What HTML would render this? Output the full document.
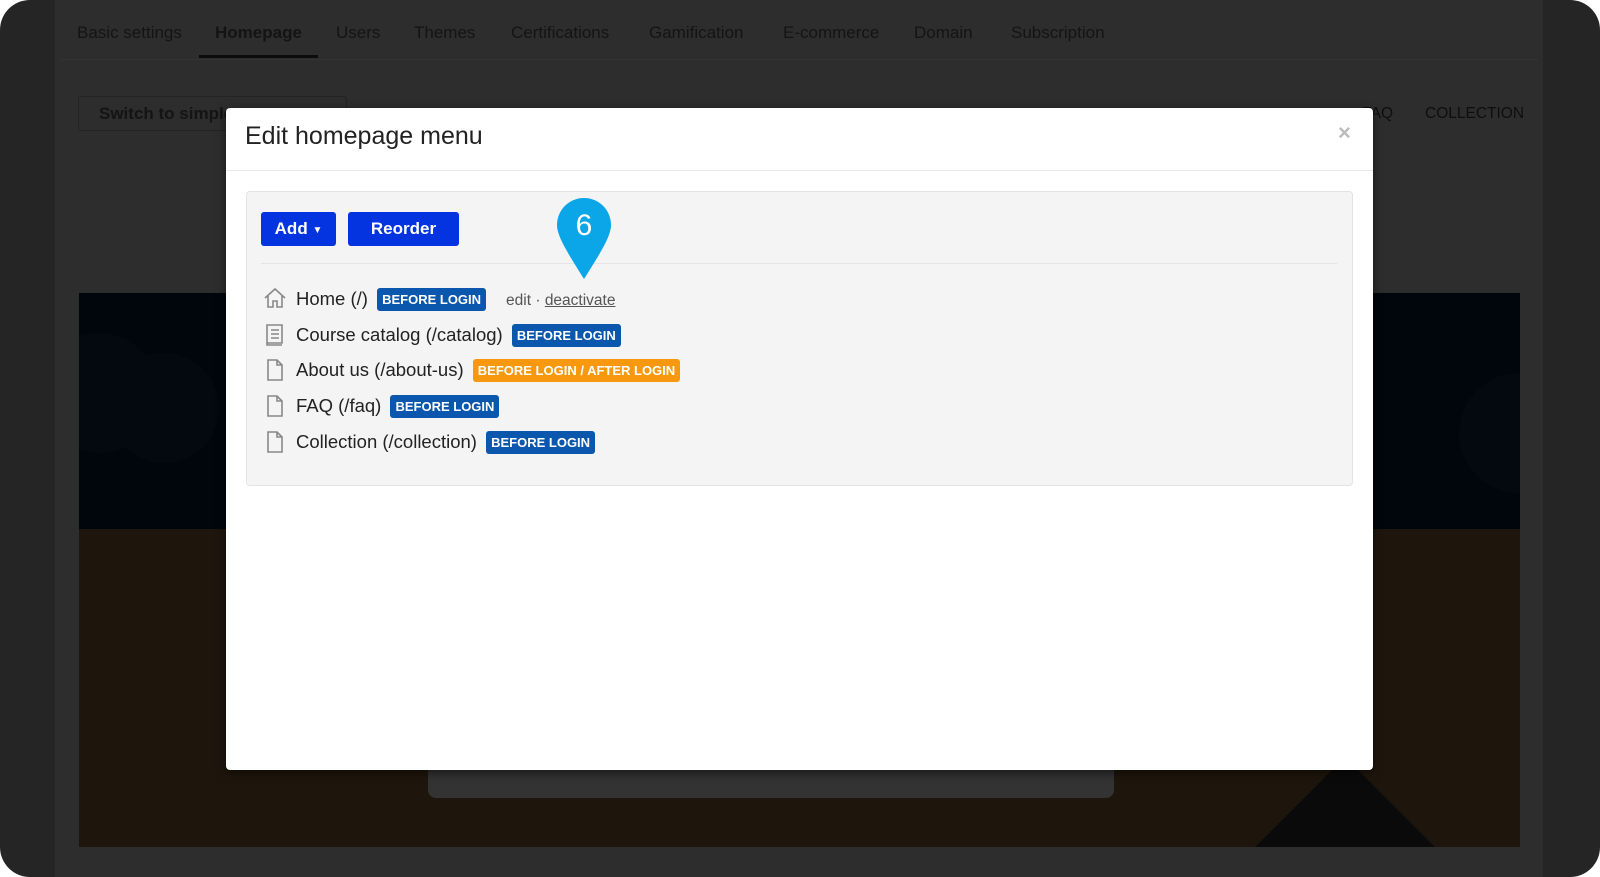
<!DOCTYPE html>
<html><head><meta charset="utf-8"><style>
*{box-sizing:border-box;margin:0;padding:0}
body{width:1600px;height:877px;background:#fff;font-family:"Liberation Sans",sans-serif;overflow:hidden;position:relative}
.frame{position:absolute;left:0;top:0;width:1600px;height:877px;background:#252525;border-radius:30px;overflow:hidden}
.page{position:absolute;left:55px;top:0;width:1488px;height:877px;background:#2d2d2d}
.tab{position:absolute;top:23px;font-size:17px;color:#141414}
.abs{position:absolute}
.modal{position:absolute;left:226px;top:108px;width:1147px;height:662px;background:#fff;border-radius:4px;box-shadow:0 3px 10px rgba(0,0,0,.5)}
.row{position:absolute;left:296px;font-size:18.5px;color:#222;height:24px;line-height:24px;white-space:nowrap}
.b{display:inline-block;background:#0b57ad;color:#fff;font-weight:bold;font-size:13px;line-height:23px;height:23px;padding:0 5px;border-radius:3px;vertical-align:top;margin-left:4px;margin-top:1px}
.o{background:#f7980f}
.btn{position:absolute;top:212px;height:34px;background:#0433e0;color:#fff;font-weight:bold;font-size:17px;line-height:34px;text-align:center;border-radius:3px}
svg.i{position:absolute;left:263px}
</style></head><body>
<div class="frame">
<div class="page"></div>
<div class="tab" style="left:77px">Basic settings</div>
<div class="tab" style="left:215px;font-weight:bold">Homepage</div>
<div class="tab" style="left:336px">Users</div>
<div class="tab" style="left:414px">Themes</div>
<div class="tab" style="left:511px">Certifications</div>
<div class="tab" style="left:649px">Gamification</div>
<div class="tab" style="left:783px">E-commerce</div>
<div class="tab" style="left:914px">Domain</div>
<div class="tab" style="left:1011px">Subscription</div>
<div class="abs" style="left:199px;top:55px;width:119px;height:3px;background:#0c0c0c"></div>
<div class="abs" style="left:60px;top:59px;width:1478px;height:1px;background:#333"></div>
<div class="abs" style="left:78px;top:96px;width:269px;height:35px;border:1px solid #232323;border-radius:3px;background:#2d2d2d;font-weight:bold;font-size:17px;line-height:33px;padding-left:20px;color:#141414">Switch to simple</div>
<div class="abs" style="left:1362px;top:105px;font-size:15.5px;color:#0e0e0e">FAQ</div>
<div class="abs" style="left:1425px;top:105px;font-size:15.5px;color:#0e0e0e">COLLECTION</div>
<div class="abs" style="left:79px;top:293px;width:1441px;height:236px;background:#01060c;overflow:hidden">
<div class="abs" style="left:-40px;top:40px;width:120px;height:120px;border-radius:50%;background:#03090f"></div>
<div class="abs" style="left:30px;top:60px;width:110px;height:110px;border-radius:50%;background:#03090f"></div>
<div class="abs" style="left:1380px;top:80px;width:120px;height:120px;border-radius:50%;background:#03090f"></div>
</div>
<div class="abs" style="left:79px;top:529px;width:1441px;height:318px;background:#1e160d;overflow:hidden">
<div class="abs" style="left:1176px;top:228px;width:0;height:0;border-left:90px solid transparent;border-right:90px solid transparent;border-bottom:90px solid #0a0a0a"></div>
</div>
<div class="abs" style="left:428px;top:770px;width:686px;height:28px;background:#333;border-radius:0 0 8px 8px"></div>
</div>
<div class="modal">
<div class="abs" style="left:19px;top:14px;font-size:25px;color:#222">Edit homepage menu</div>
<div class="abs" style="left:1112px;top:12px;font-size:22px;color:#bbb;font-weight:bold">×</div>
<div class="abs" style="left:0;top:62px;width:1147px;height:1px;background:#e8e8e8"></div>
</div>
<div class="abs" style="left:246px;top:191px;width:1107px;height:295px;background:#f4f4f4;border:1px solid #e3e3e3;border-radius:4px"></div>
<div class="btn" style="left:261px;width:75px">Add <span style="font-size:10px;vertical-align:1px">▼</span></div>
<div class="btn" style="left:348px;width:111px">Reorder</div>
<div class="abs" style="left:261px;top:263px;width:1076px;height:1px;background:#e4e4e4"></div>
<svg class="i" style="top:287px" width="24" height="22" viewBox="0 0 24 22" fill="none" stroke="#888" stroke-width="1.6"><path d="M2 11L12 2l10 9M5 9v11h5v-6h4v6h5V9"/></svg>
<svg class="i" style="top:323px" width="24" height="24" viewBox="0 0 24 24" fill="none" stroke="#888" stroke-width="1.6"><path d="M4 2h15v18H4zM4 20v2h15M8 7h8M8 11h8M8 15h8"/></svg>
<svg class="i" style="top:358px" width="24" height="24" viewBox="0 0 24 24" fill="none" stroke="#888" stroke-width="1.6"><path d="M5 2h9l5 5v15H5zM14 2v5h5"/></svg>
<svg class="i" style="top:394px" width="24" height="24" viewBox="0 0 24 24" fill="none" stroke="#888" stroke-width="1.6"><path d="M5 2h9l5 5v15H5zM14 2v5h5"/></svg>
<svg class="i" style="top:430px" width="24" height="24" viewBox="0 0 24 24" fill="none" stroke="#888" stroke-width="1.6"><path d="M5 2h9l5 5v15H5zM14 2v5h5"/></svg>
<div class="row" style="top:287px">Home (/) <span class="b">BEFORE LOGIN</span><span style="margin-left:20px;font-size:15.5px;color:#555">edit · <u>deactivate</u></span></div>
<div class="row" style="top:323px">Course catalog (/catalog) <span class="b">BEFORE LOGIN</span></div>
<div class="row" style="top:358px">About us (/about-us) <span class="b o">BEFORE LOGIN / AFTER LOGIN</span></div>
<div class="row" style="top:394px">FAQ (/faq) <span class="b">BEFORE LOGIN</span></div>
<div class="row" style="top:430px">Collection (/collection) <span class="b">BEFORE LOGIN</span></div>
<svg class="abs" style="left:557px;top:198px" width="54" height="82" viewBox="0 0 54 82"><path d="M27 0C42 0 54 12 54 27C54 38 44 54 27 81C10 54 0 38 0 27C0 12 12 0 27 0Z" fill="#0aa6e8"/><text x="27" y="37" text-anchor="middle" font-family="Liberation Sans" font-size="30" fill="#fff">6</text></svg>
</body></html>
